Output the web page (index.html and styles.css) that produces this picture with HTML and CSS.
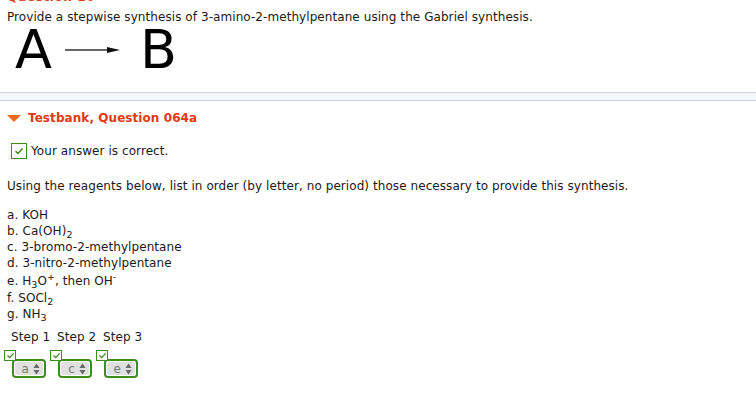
FILE: index.html
```html
<!DOCTYPE html>
<html>
<head>
<meta charset="utf-8">
<link rel="stylesheet" href="styles.css">
</head>
<body>
<div class="top">
  <div class="qtitle">Question 10</div>
  <p class="prompt">Provide a stepwise synthesis of 3-amino-2-methylpentane using the Gabriel synthesis.</p>
  <div class="reaction">
    <span class="big">A</span>
    <svg class="arrow" width="56" height="8" viewBox="0 0 56 8"><line x1="0" y1="4" x2="46" y2="4" stroke="#333" stroke-width="1.4"/><polygon points="42,1 55,4 42,7" fill="#111"/></svg>
    <span class="big b">B</span>
  </div>
</div>
<div class="band"></div>
<div class="section">
  <div class="sechead"><span class="tri"></span><span class="sectitle">Testbank, Question 064a</span></div>
  <div class="correct"><span class="cbox"><svg width="10" height="8" viewBox="0 0 10 8"><polyline points="1.5,4.2 4,6.4 8.5,1.5" fill="none" stroke="#3d8d1b" stroke-width="1.5"/></svg></span>Your answer is correct.</div>
  <p class="instr">Using the reagents below, list in order (by letter, no period) those necessary to provide this synthesis.</p>
  <ul class="reagents">
    <li>a. KOH</li>
    <li>b. Ca(OH)<sub>2</sub></li>
    <li>c. 3-bromo-2-methylpentane</li>
    <li>d. 3-nitro-2-methylpentane</li>
    <li class="tall">e. H<sub>3</sub>O<sup>+</sup>, then OH<sup>-</sup></li>
    <li>f. SOCl<sub>2</sub></li>
    <li>g. NH<sub>3</sub></li>
  </ul>
  <div class="steps">
    <div class="step">
      <div class="steplabel">Step 1</div>
      <div class="selwrap"><span class="mini"><svg width="9" height="7" viewBox="0 0 9 7"><polyline points="1.5,3.6 3.7,5.6 7.6,1.4" fill="none" stroke="#3d8d1b" stroke-width="1.3"/></svg></span><div class="sel"><div class="selin">a<span class="updown"><svg width="7" height="12" viewBox="0 0 7 12"><polygon points="3.5,0.5 6.5,5 0.5,5" fill="#666"/><polygon points="0.5,7 6.5,7 3.5,11.5" fill="#666"/></svg></span></div></div></div>
    </div>
    <div class="step">
      <div class="steplabel">Step 2</div>
      <div class="selwrap"><span class="mini"><svg width="9" height="7" viewBox="0 0 9 7"><polyline points="1.5,3.6 3.7,5.6 7.6,1.4" fill="none" stroke="#3d8d1b" stroke-width="1.3"/></svg></span><div class="sel"><div class="selin">c<span class="updown"><svg width="7" height="12" viewBox="0 0 7 12"><polygon points="3.5,0.5 6.5,5 0.5,5" fill="#666"/><polygon points="0.5,7 6.5,7 3.5,11.5" fill="#666"/></svg></span></div></div></div>
    </div>
    <div class="step">
      <div class="steplabel">Step 3</div>
      <div class="selwrap"><span class="mini"><svg width="9" height="7" viewBox="0 0 9 7"><polyline points="1.5,3.6 3.7,5.6 7.6,1.4" fill="none" stroke="#3d8d1b" stroke-width="1.3"/></svg></span><div class="sel"><div class="selin">e<span class="updown"><svg width="7" height="12" viewBox="0 0 7 12"><polygon points="3.5,0.5 6.5,5 0.5,5" fill="#666"/><polygon points="0.5,7 6.5,7 3.5,11.5" fill="#666"/></svg></span></div></div></div>
    </div>
  </div>
</div>
</body>
</html>
```
FILE: styles.css
```css
html, body { margin: 0; padding: 0; background: #fff; }
body {
  font-family: "DejaVu Sans", Verdana, sans-serif;
  font-size: 12px;
  letter-spacing: 0.07px;
  color: #1a1a1a;
  overflow: hidden;
}
.top { padding-left: 7px; }
.qtitle {
  color: #e03a10;
  font-weight: bold;
  font-size: 12px;
  letter-spacing: 0.6px;
  line-height: 14px;
  margin-top: -10px;
  height: 14px;
}
.prompt { margin: 6px 0 0 0; line-height: 15px; }
.reaction {
  display: flex;
  align-items: center;
  height: 56px;
  padding-left: 8px;
  margin-top: -3px;
}
.big {
  font-family: "DejaVu Sans", Verdana, sans-serif;
  font-size: 54px;
  line-height: 54px;
  letter-spacing: 0;
  color: #000;
}
.arrow { margin: 0 19px 0 13px; }
.band {
  margin-top: 14px;
  height: 7px;
  background: #f4f7fa;
  border-top: 1px solid #c6d2e2;
  border-bottom: 1px solid #c6d2e2;
}
.section { padding-left: 7px; }
.sechead { display: flex; align-items: center; margin-top: 9px; height: 16px; }
.tri {
  width: 0; height: 0;
  border-left: 7px solid transparent;
  border-right: 7px solid transparent;
  border-top: 7px solid #f26a1b;
  margin-right: 7px;
}
.sectitle { color: #e03a10; font-weight: bold; font-size: 12px; }
.correct { display: flex; align-items: center; margin-top: 17px; margin-left: 4px; line-height: 16px; }
.cbox {
  box-sizing: border-box;
  width: 16px; height: 16px;
  border: 1.5px solid #3d8d1b;
  display: flex; align-items: center; justify-content: center;
  margin-right: 4px;
  background: #fff;
}
.instr { margin: 20px 0 0 0; line-height: 15px; }
.reagents { list-style: none; padding: 0; margin: 13px 0 0 0; }
.reagents li { line-height: 16px; height: 16px; }
.reagents li.tall { height: 18px; line-height: 20px; }
.reagents li.tall + li { height: 17px; line-height: 18px; }
sub, sup { font-size: 9.5px; line-height: 0; }
sub { vertical-align: -3px; }
sup { vertical-align: 5px; }
.steps { display: flex; margin-left: 4px; margin-top: 8px; }
.step { width: 46px; }
.steplabel { line-height: 15px; white-space: nowrap; }
.selwrap { position: relative; padding: 14px 0 0 8px; margin-left: -7px; }
.mini {
  position: absolute;
  left: 0; top: 5px;
  box-sizing: border-box;
  width: 12px; height: 11px;
  border: 1.3px solid #3d8d1b;
  background: #fff;
  display: flex; align-items: center; justify-content: center;
  z-index: 1;
}
.sel {
  box-sizing: border-box;
  width: 34px; height: 19px;
  border: 2px solid #3d8d1b;
  border-radius: 4px;
  padding: 1px;
  background: #fff;
}
.selin {
  height: 100%;
  background: #e0e0e0;
  border-radius: 3px;
  display: flex; align-items: center; justify-content: flex-end;
  padding-right: 3px;
  color: #777;
  font-size: 12px;
}
.updown { display: flex; margin-left: 4px; }
```
